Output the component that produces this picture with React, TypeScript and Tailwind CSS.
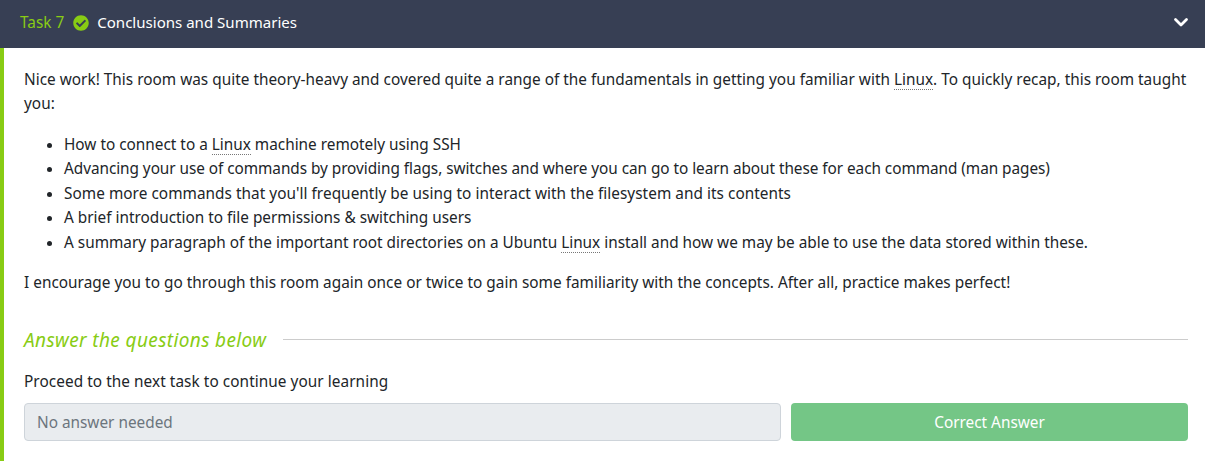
const linux = (
  <span className="border-b border-dotted border-[#777]">Linux</span>
);

function CheckCircle() {
  return (
    <svg className="h-4 w-4 shrink-0" viewBox="0 0 512 512" fill="#88cc14">
      <path d="M504 256c0 137-111 248-248 248S8 393 8 256 119 8 256 8s248 111 248 248zM227 387l184-184c6-6 6-16 0-23l-23-23c-6-6-16-6-23 0L216 307l-70-70c-6-6-16-6-23 0l-23 23c-6 6-6 16 0 23l104 104c6 6 16 6 23 0z" />
    </svg>
  );
}

export default function App() {
  return (
    <div className="h-[461px] w-[1205px] overflow-hidden bg-white font-['Noto_Sans',sans-serif] text-[15.35px] text-[#212529]">
      <div className="flex h-12 items-center bg-[#373f54] pb-[3px] pl-5 pr-[14px]">
        <span className="text-[#88cc14]">Task 7</span>
        <span className="ml-[9px] mr-2">
          <CheckCircle />
        </span>
        <span className="text-[15.05px] text-white">Conclusions and Summaries</span>
        <svg className="ml-auto h-5 w-5" viewBox="0 0 20 20" fill="none" stroke="white" strokeWidth="2.8" strokeLinecap="round" strokeLinejoin="round">
          <path d="M4.500 6.500 10 12l5.500-5.500" />
        </svg>
      </div>
      <div className="h-[413px] border-l-4 border-[#88cc14] pl-5 pr-[17px] pt-[18.5px]">
        <p className="leading-6 tracking-[0.015px]">
          Nice work! This room was quite theory-heavy and covered quite a range of the fundamentals in getting you familiar with {linux}. To quickly recap, this room taught you:
        </p>
        <ul className="mt-[17px] list-disc pl-10 leading-[24.5px]">
          <li>How to connect to a {linux} machine remotely using SSH</li>
          <li className="tracking-[-0.05px]">Advancing your use of commands by providing flags, switches and where you can go to learn about these for each command (man pages)</li>
          <li className="tracking-[0.04px]">Some more commands that you'll frequently be using to interact with the filesystem and its contents</li>
          <li>A brief introduction to file permissions &amp; switching users</li>
          <li>A summary paragraph of the important root directories on a Ubuntu {linux} install and how we may be able to use the data stored within these.</li>
        </ul>
        <p className="mt-[15.5px] leading-6 tracking-[0.02px]">
          I encourage you to go through this room again once or twice to gain some familiarity with the concepts. After all, practice makes perfect!
        </p>
        <div className="mt-[32px] flex items-center gap-[17px]">
          <h5 className="text-[19px] italic leading-7 tracking-[0.38px] text-[#88cc14]">Answer the questions below</h5>
          <div className="h-px flex-1 bg-[#ccc]" />
        </div>
        <p className="mt-[15px] leading-6 tracking-[0.06px]">Proceed to the next task to continue your learning</p>
        <div className="mt-[10px] flex gap-2.5">
          <div className="flex h-[38px] flex-1 items-center rounded border border-[#ced4da] bg-[#e9ecef] px-3 pt-[2px] text-[#6c757d]">
            No answer needed
          </div>
          <button className="h-[38px] w-[397px] rounded bg-[#74c686] pt-[2px] text-center text-white">Correct Answer</button>
        </div>
      </div>
    </div>
  );
}
